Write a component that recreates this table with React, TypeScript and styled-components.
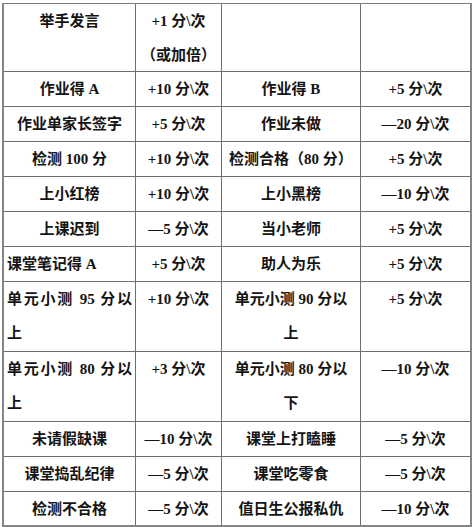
import React from "react";
import styled, { createGlobalStyle } from "styled-components";

const GlobalStyle = createGlobalStyle`
  html, body {
    margin: 0;
    padding: 0;
    background: #ffffff;
  }
`;

const Sheet = styled("div")`
  box-sizing: border-box;
  width: 470px;
  margin: 3px 0 0 2px;
  display: grid;
  grid-template-columns: 131px 85px 138px 109px;
  grid-template-rows: 67px repeat(6, 34px) 69px 69px 34px 34px 33px;
  gap: 1px;
  background: #6e6e6e;
  border-top: 1px solid #7a7a7a;
  border-left: 2px solid #858585;
  border-right: 2px solid #858585;
  border-bottom: 2px solid #858585;
  font-family: "Liberation Serif", "Noto Sans CJK SC", serif;
  font-weight: bold;
  font-size: 15px;
  color: #141414;
`;

type Align = "center" | "left" | "justify";

const Cell = styled("div")<{ $align: Align }>`
  background: #ffffff;
  line-height: 34px;
  padding: ${(p) => (p.$align === "center" ? "0 5px" : "0 3px")};
  text-align: ${(p) => p.$align};
  text-align-last: ${(p) => (p.$align === "justify" ? "justify" : "auto")};
  white-space: nowrap;
  overflow: hidden;
`;

const Line = styled("div")`
  display: block;
`;

type CellData = { lines: string[]; align?: Align };

const c = (text: string, align: Align = "center"): CellData => ({
  lines: text === "" ? [] : text.split("/"),
  align,
});

const rows: CellData[][] = [
  [c("举手发言"), c("+1 分\\次/（或加倍）"), c(""), c("")],
  [c("作业得 A"), c("+10 分\\次"), c("作业得 B"), c("+5 分\\次")],
  [c("作业单家长签字"), c("+5 分\\次"), c("作业未做"), c("—20 分\\次")],
  [c("检测 100 分"), c("+10 分\\次"), c("检测合格（80 分）"), c("+5 分\\次")],
  [c("上小红榜"), c("+10 分\\次"), c("上小黑榜"), c("—10 分\\次")],
  [c("上课迟到"), c("—5 分\\次"), c("当小老师"), c("+5 分\\次")],
  [c("课堂笔记得 A", "left"), c("+5 分\\次"), c("助人为乐"), c("+5 分\\次")],
  [
    c("单元小测 95 分以/上", "justify"),
    c("+10 分\\次"),
    c("单元小测 90 分以/上"),
    c("+5 分\\次"),
  ],
  [
    c("单元小测 80 分以/上", "justify"),
    c("+3 分\\次"),
    c("单元小测 80 分以/下"),
    c("—10 分\\次"),
  ],
  [c("未请假缺课"), c("—10 分\\次"), c("课堂上打瞌睡"), c("—5 分\\次")],
  [c("课堂捣乱纪律"), c("—5 分\\次"), c("课堂吃零食"), c("—5 分\\次")],
  [c("检测不合格"), c("—5 分\\次"), c("值日生公报私仇"), c("—10 分\\次")],
];

export const App = () => {
  return (
    <>
      <GlobalStyle />
      <Sheet>
        {rows.map((row, r) =>
          row.map((cell, i) => (
            <Cell key={`${r}-${i}`} $align={cell.align || "center"}>
              {cell.lines.map((line, j) => (
                <Line key={j}>{line}</Line>
              ))}
            </Cell>
          ))
        )}
      </Sheet>
    </>
  );
};

export default App;
